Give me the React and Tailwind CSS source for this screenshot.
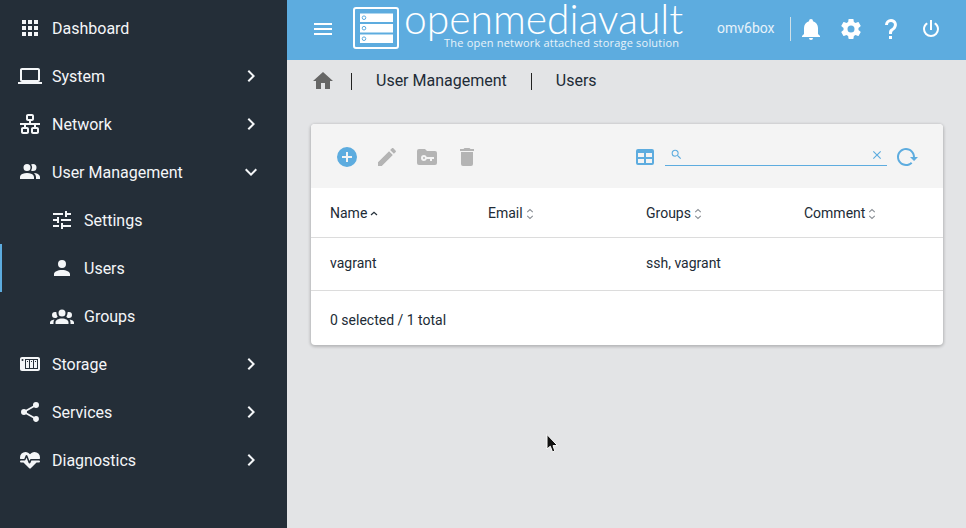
import React from "react";

const P = {
  apps: "M16,20H20V16H16M16,14H20V10H16M10,8H14V4H10M16,8H20V4H16M10,14H14V10H10M4,14H8V10H4M4,20H8V16H4M10,20H14V16H10M4,8H8V4H4V8Z",
  laptop: "M4,6H20V16H4M20,18A2,2 0 0,0 22,16V6C22,4.89 21.1,4 20,4H4C2.89,4 2,4.89 2,6V16A2,2 0 0,0 4,18H0V20H24V18H20Z",
  lan: "M10,2C8.89,2 8,2.89 8,4V7C8,8.11 8.89,9 10,9H11V11H2V13H6V15H5C3.89,15 3,15.89 3,17V20C3,21.11 3.89,22 5,22H9C10.11,22 11,21.11 11,20V17C11,15.89 10.11,15 9,15H8V13H16V15H15C13.89,15 13,15.89 13,17V20C13,21.11 13.89,22 15,22H19C20.11,22 21,21.11 21,20V17C21,15.89 20.11,15 19,15H18V13H22V11H13V9H14C15.11,9 16,8.11 16,7V4C16,2.89 15.11,2 14,2H10M10,4H14V7H10V4M5,17H9V20H5V17M15,17H19V20H15V17Z",
  multi: "M16 17V19H2V17S2 13 9 13 16 17 16 17M12.5 7.5A3.5 3.5 0 1 0 9 11A3.5 3.5 0 0 0 12.5 7.5M15.94 13A5.32 5.32 0 0 1 18 17V19H22V17S22 13.37 15.94 13M15 4A3.39 3.39 0 0 0 13.07 4.59A5 5 0 0 1 13.07 10.41A3.39 3.39 0 0 0 15 11A3.5 3.5 0 0 0 15 4Z",
  tune: "M3,17V19H9V17H3M3,5V7H13V5H3M13,21V19H21V17H13V15H11V21H13M7,9V11H3V13H7V15H9V9H7M21,13V11H11V13H21M15,9H17V7H21V5H17V3H15V9Z",
  account: "M12,4A4,4 0 0,1 16,8A4,4 0 0,1 12,12A4,4 0 0,1 8,8A4,4 0 0,1 12,4M12,14C16.42,14 20,15.79 20,18V20H4V18C4,15.79 7.58,14 12,14Z",
  group: "M12,5.5A3.5,3.5 0 0,1 15.5,9A3.5,3.5 0 0,1 12,12.5A3.5,3.5 0 0,1 8.5,9A3.5,3.5 0 0,1 12,5.5M5,8C5.56,8 6.08,8.15 6.53,8.42C6.38,9.85 6.8,11.27 7.66,12.38C7.16,13.34 6.16,14 5,14A3,3 0 0,1 2,11A3,3 0 0,1 5,8M19,8A3,3 0 0,1 22,11A3,3 0 0,1 19,14C17.84,14 16.84,13.34 16.34,12.38C17.2,11.27 17.62,9.85 17.47,8.42C17.92,8.15 18.44,8 19,8M5.5,18.25C5.5,16.18 8.41,14.5 12,14.5C15.59,14.5 18.5,16.18 18.5,18.25V20H5.5V18.25M0,20V18.5C0,17.11 1.89,15.94 4.45,15.6C3.86,16.28 3.5,17.22 3.5,18.25V20H0M24,20H20.5V18.25C20.5,17.22 20.14,16.28 19.55,15.6C22.11,15.94 24,17.11 24,18.5V20Z",
  nas: "M4,5C2.89,5 2,5.89 2,7V17C2,18.11 2.89,19 4,19H20C21.11,19 22,18.11 22,17V7C22,5.89 21.11,5 20,5H4M4.5,7A1,1 0 0,1 5.5,8A1,1 0 0,1 4.5,9A1,1 0 0,1 3.5,8A1,1 0 0,1 4.5,7M7,7H20V17H7V7M8,8V16H11V8H8M12,8V16H15V8H12M16,8V16H19V8H16M9,9H10V10H9V9M13,9H14V10H13V9M17,9H18V10H17V9Z",
  share: "M18,16.08C17.24,16.08 16.56,16.38 16.04,16.85L8.91,12.7C8.96,12.47 9,12.24 9,12C9,11.76 8.96,11.53 8.91,11.3L15.96,7.19C16.5,7.69 17.21,8 18,8A3,3 0 0,0 21,5A3,3 0 0,0 18,2A3,3 0 0,0 15,5C15,5.24 15.04,5.47 15.09,5.7L8.04,9.81C7.5,9.31 6.79,9 6,9A3,3 0 0,0 3,12A3,3 0 0,0 6,15C6.79,15 7.5,14.69 8.04,14.19L15.16,18.34C15.11,18.55 15.08,18.77 15.08,19C15.08,20.61 16.39,21.91 18,21.91C19.61,21.91 20.92,20.61 20.92,19A2.92,2.92 0 0,0 18,16.08Z",
  pulse: "M7.5,4A5.5,5.5 0 0,0 2,9.5C2,10 2.09,10.5 2.22,11H6.3L7.57,7.63C7.87,6.83 9.05,6.75 9.43,7.63L11.5,13L12.09,11.58C12.22,11.25 12.57,11 13,11H21.78C21.91,10.5 22,10 22,9.5A5.5,5.5 0 0,0 16.5,4C14.64,4 13,4.93 12,6.34C11,4.93 9.36,4 7.5,4M3,12.5A1,1 0 0,0 2,13.5A1,1 0 0,0 3,14.5H5.44L11,20C12,20.9 12,20.9 13,20L18.56,14.5H21A1,1 0 0,0 22,13.5A1,1 0 0,0 21,12.5H13.4L12.47,14.8C12.07,15.81 10.92,15.67 10.55,14.83L8.5,9.5L7.54,11.83C7.39,12.21 7.05,12.5 6.6,12.5H3Z",
  right: "M8.59,16.58L13.17,12L8.59,7.41L10,6L16,12L10,18L8.59,16.58Z",
  down: "M7.41,8.58L12,13.17L16.59,8.58L18,10L12,16L6,10L7.41,8.58Z",
  menu: "M3,6H21V8H3V6M3,11H21V13H3V11M3,16H21V18H3V16Z",
  bell: "M21,19V20H3V19L5,17V11C5,7.9 7.03,5.17 10,4.29C10,4.19 10,4.1 10,4A2,2 0 0,1 12,2A2,2 0 0,1 14,4C14,4.1 14,4.19 14,4.29C16.97,5.17 19,7.9 19,11V17L21,19M14,21A2,2 0 0,1 12,23A2,2 0 0,1 10,21",
  cog: "M12,15.5A3.5,3.5 0 0,1 8.5,12A3.5,3.5 0 0,1 12,8.5A3.5,3.5 0 0,1 15.5,12A3.5,3.5 0 0,1 12,15.5M19.43,12.97C19.47,12.65 19.5,12.33 19.5,12C19.5,11.67 19.47,11.34 19.43,11L21.54,9.37C21.73,9.22 21.78,8.95 21.66,8.73L19.66,5.27C19.54,5.05 19.27,4.96 19.05,5.05L16.56,6.05C16.04,5.66 15.5,5.32 14.87,5.07L14.5,2.42C14.46,2.18 14.25,2 14,2H10C9.75,2 9.54,2.18 9.5,2.42L9.13,5.07C8.5,5.32 7.96,5.66 7.44,6.05L4.95,5.05C4.73,4.96 4.46,5.05 4.34,5.27L2.34,8.73C2.21,8.95 2.27,9.22 2.46,9.37L4.57,11C4.53,11.34 4.5,11.67 4.5,12C4.5,12.33 4.53,12.65 4.57,12.97L2.46,14.63C2.27,14.78 2.21,15.05 2.34,15.27L4.34,18.73C4.46,18.95 4.73,19.03 4.95,18.95L7.44,17.94C7.96,18.34 8.5,18.68 9.13,18.93L9.5,21.58C9.54,21.82 9.75,22 10,22H14C14.25,22 14.46,21.82 14.5,21.58L14.87,18.93C15.5,18.67 16.04,18.34 16.56,17.94L19.05,18.95C19.27,19.03 19.54,18.95 19.66,18.73L21.66,15.27C21.78,15.05 21.73,14.78 21.54,14.63L19.43,12.97Z",
  help: "M10,19H13V22H10V19M12,2C17.35,2.22 19.68,7.62 16.5,11.67C15.67,12.67 14.33,13.33 13.67,14.17C13,15 13,16 13,17H10C10,15.33 10,13.92 10.67,12.92C11.33,11.92 12.67,11.33 13.5,10.67C15.92,8.43 15.32,5.26 12,5A3,3 0 0,0 9,8H6A6,6 0 0,1 12,2Z",
  power: "M16.56,5.44L15.11,6.89C16.84,7.94 18,9.83 18,12A6,6 0 0,1 12,18A6,6 0 0,1 6,12C6,9.83 7.16,7.94 8.88,6.88L7.44,5.44C5.36,6.88 4,9.28 4,12A8,8 0 0,0 12,20A8,8 0 0,0 20,12C20,9.28 18.64,6.88 16.56,5.44M13,3H11V13H13",
  home: "M10,20V14H14V20H19V12H22L12,3L2,12H5V20H10Z",
  plus: "M17,13H13V17H11V13H7V11H11V7H13V11H17M12,2A10,10 0 0,0 2,12A10,10 0 0,0 12,22A10,10 0 0,0 22,12A10,10 0 0,0 12,2Z",
  pencil: "M20.71,7.04C21.1,6.65 21.1,6 20.71,5.63L18.37,3.29C18,2.9 17.35,2.9 16.96,3.29L15.12,5.12L18.87,8.87M3,17.25V21H6.75L17.81,9.93L14.06,6.18L3,17.25Z",
  folderKey: "M4,4H10L12,6H20A2,2 0 0,1 22,8V18A2,2 0 0,1 20,20H4A2,2 0 0,1 2,18V6A2,2 0 0,1 4,4M9,10A3,3 0 0,0 6,13A3,3 0 0,0 9,16C10.2,16 11.3,15.2 11.7,14H15V16H17V14H19V12H11.7C11.3,10.8 10.2,10 9,10M9,12A1,1 0 0,1 10,13A1,1 0 0,1 9,14A1,1 0 0,1 8,13A1,1 0 0,1 9,12Z",
  del: "M19,4H15.5L14.5,3H9.5L8.5,4H5V6H19M6,19A2,2 0 0,0 8,21H16A2,2 0 0,0 18,19V7H6V19Z",
  table: "M5,4H19A2,2 0 0,1 21,6V18A2,2 0 0,1 19,20H5A2,2 0 0,1 3,18V6A2,2 0 0,1 5,4M5,8V12H11V8H5M13,8V12H19V8H13M5,14V18H11V14H5M13,14V18H19V14H13Z",
  search: "M9.5,3A6.5,6.5 0 0,1 16,9.5C16,11.11 15.41,12.59 14.44,13.73L14.71,14H15.5L20.5,19L19,20.5L14,15.5V14.71L13.73,14.44C12.59,15.41 11.11,16 9.5,16A6.5,6.5 0 0,1 3,9.5A6.5,6.5 0 0,1 9.5,3M9.5,5C7,5 5,7 5,9.5C5,12 7,14 9.5,14C12,14 14,12 14,9.5C14,7 12,5 9.5,5Z",
  close: "M19,6.41L17.59,5L12,10.59L6.41,5L5,6.41L10.59,12L5,17.59L6.41,19L12,13.41L17.59,19L19,17.59L13.41,12L19,6.41Z",
  reload: "M2 12C2 16.97 6.03 21 11 21C13.39 21 15.68 20.06 17.4 18.4L15.9 16.9C14.63 18.25 12.86 19 11 19C4.76 19 1.64 11.46 6.05 7.05C10.46 2.64 18 5.77 18 12H15L19 16H19.1L23 12H20C20 7.03 15.97 3 11 3C6.03 3 2 7.03 2 12Z",
};

function Icon({ d, className = "w-6 h-6" }) {
  return (
    <svg viewBox="0 0 24 24" className={`${className} shrink-0 fill-current`}>
      <path d={d} />
    </svg>
  );
}

function NavRow({ icon, label, chevron, sub, active }) {
  return (
    <div className={`relative h-12 flex items-center text-[16px] ${sub ? "pl-[50px]" : "pl-[18px]"}`}>
      {active && <div className="absolute left-0 top-0 bottom-0 w-[2px] bg-[#5dacdf]" />}
      <Icon d={icon} />
      <span className="ml-[10px] flex-1 pt-[2px]">{label}</span>
      {chevron && (
        <span className="mr-6">
          <Icon d={chevron} />
        </span>
      )}
    </div>
  );
}

function Sort({ label, asc }) {
  return (
    <div className="flex items-center gap-[3px]">
      <span>{label}</span>
      {asc ? (
        <svg viewBox="0 0 8 5" className="w-2 h-[5px] fill-none stroke-[#25303a] stroke-[1.2]">
          <path d="M1 4L4 1.2L7 4" />
        </svg>
      ) : (
        <svg viewBox="0 0 8 12" className="w-2 h-3 fill-none stroke-[#8b9096] stroke-[1.1]">
          <path d="M1.2 4.2L4 1.5L6.8 4.2M1.2 7.8L4 10.5L6.8 7.8" />
        </svg>
      )}
    </div>
  );
}

function ToolBtn({ d, color }) {
  return (
    <div className={`w-10 h-10 flex items-center justify-center ${color}`}>
      <Icon d={d} />
    </div>
  );
}

export default function App() {
  return (
    <div className="relative w-[966px] h-[528px] flex overflow-hidden bg-[#e3e4e6] font-['Roboto',sans-serif] text-[#1f2933]">
      <aside className="w-[287px] h-full shrink-0 bg-[#242e38] text-[#f4f6f8] pt-1">
        <NavRow icon={P.apps} label="Dashboard" />
        <NavRow icon={P.laptop} label="System" chevron={P.right} />
        <NavRow icon={P.lan} label="Network" chevron={P.right} />
        <NavRow icon={P.multi} label="User Management" chevron={P.down} />
        <NavRow sub icon={P.tune} label="Settings" />
        <NavRow sub active icon={P.account} label="Users" />
        <NavRow sub icon={P.group} label="Groups" />
        <NavRow icon={P.nas} label="Storage" chevron={P.right} />
        <NavRow icon={P.share} label="Services" chevron={P.right} />
        <NavRow icon={P.pulse} label="Diagnostics" chevron={P.right} />
      </aside>

      <main className="flex-1 flex flex-col min-w-0">
        <header className="h-[60px] shrink-0 bg-[#5dacdf] text-white flex items-center pl-6 pb-[2px]">
          <Icon d={P.menu} />
          <svg viewBox="0 0 46 42" className="w-[46px] h-[42px] ml-[18px] mt-[-2px] shrink-0">
            <rect x="1" y="1" width="44" height="40" rx="2" fill="none" stroke="#fff" strokeWidth="2" />
            <rect x="7" y="6.5" width="33" height="8.5" fill="#fff" />
            <rect x="7" y="17" width="33" height="8.5" fill="#fff" />
            <rect x="7" y="27.5" width="33" height="8.5" fill="#fff" />
            <circle cx="11" cy="10.7" r="1.8" fill="none" stroke="#5dacdf" />
            <circle cx="11" cy="21.2" r="1.8" fill="none" stroke="#5dacdf" />
            <circle cx="11" cy="31.7" r="1.8" fill="none" stroke="#5dacdf" />
          </svg>
          <div className="ml-[5px] w-[280px] flex flex-col mt-[-11px]">
            <span className="font-['Lato',sans-serif] font-light text-[40.8px] leading-[38px] whitespace-nowrap">openmediavault</span>
            <span className="font-['Open_Sans',sans-serif] text-[11px] leading-[11px] mt-[-1px] ml-[40px] tracking-[0.2px] whitespace-nowrap text-[#e8f3fa]">The open network attached storage solution</span>
          </div>
          <span className="ml-[33px] text-[14px] text-[#e6f2fa] mt-[-2px]">omv6box</span>
          <div className="ml-[15px] w-px h-6 bg-[#cfe0e8]" />
          <div className="flex">
            <div className="w-10 flex justify-center"><Icon d={P.bell} /></div>
            <div className="w-10 flex justify-center"><Icon d={P.cog} /></div>
            <div className="w-10 flex justify-center"><Icon d={P.help} /></div>
            <div className="w-10 flex justify-center"><Icon d={P.power} /></div>
          </div>
        </header>

        <nav className="h-[42px] shrink-0 flex items-center pl-6 text-[16px] text-[#212b36]">
          <span className="text-[#666]"><Icon d={P.home} /></span>
          <div className="ml-4 w-px h-[17px] bg-[#222]" />
          <span className="ml-6">User Management</span>
          <div className="ml-6 w-px h-[17px] bg-[#222]" />
          <span className="ml-6">Users</span>
        </nav>

        <section className="mt-[22px] ml-6 w-[632px] bg-white rounded-[4px] shadow-[0_1px_3px_1px_rgba(0,0,0,0.2)] overflow-hidden text-[14px]">
          <div className="h-16 bg-[#f4f4f4] flex items-center pl-4 pt-[2px]">
            <ToolBtn d={P.plus} color="text-[#5dacdf]" />
            <ToolBtn d={P.pencil} color="text-[#b4b4b4]" />
            <ToolBtn d={P.folderKey} color="text-[#b4b4b4]" />
            <ToolBtn d={P.del} color="text-[#b4b4b4]" />
            <div className="ml-[138px] w-10 h-10 flex items-center justify-center text-[#5dacdf]">
              <Icon d={P.table} />
            </div>
            <div className="w-[222px] h-[25px] mt-[-8px] flex items-center border-b border-[#5dacdf] text-[#5dacdf] pl-[5px] pr-[3px]">
              <Icon d={P.search} className="w-[13px] h-[13px] mt-[4px]" />
              <div className="flex-1" />
              <Icon d={P.close} className="w-[14px] h-[14px] mt-[4px]" />
            </div>
            <div className="ml-[8px] w-6 h-6 flex items-center justify-center text-[#5dacdf]">
              <Icon d={P.reload} />
            </div>
          </div>
          <div className="h-[50px] grid grid-cols-[158px_158px_158px_1fr] pl-[19px] pt-[2px] items-center border-b border-[#dcdcdc] text-[#212b36]">
            <Sort label="Name" asc />
            <Sort label="Email" />
            <Sort label="Groups" />
            <Sort label="Comment" />
          </div>
          <div className="h-[53px] grid grid-cols-[158px_158px_158px_1fr] pl-[19px] pb-[2px] items-center border-b border-[#dcdcdc] text-[#212b36]">
            <span>vagrant</span>
            <span></span>
            <span>ssh, vagrant</span>
            <span></span>
          </div>
          <div className="h-[54px] flex items-center pl-[19px] pt-[4px] text-[#212b36]">0 selected / 1 total</div>
        </section>
      </main>

      <svg viewBox="0 0 16 22" className="absolute left-[545px] top-[433px] w-4 h-[22px]">
        <path d="M2 1.5L2 16L5.3 13.2L7.5 19L9.8 18L8 12.6L12.5 12.6Z" fill="#111" stroke="#fff" strokeWidth="1" />
      </svg>
    </div>
  );
}
